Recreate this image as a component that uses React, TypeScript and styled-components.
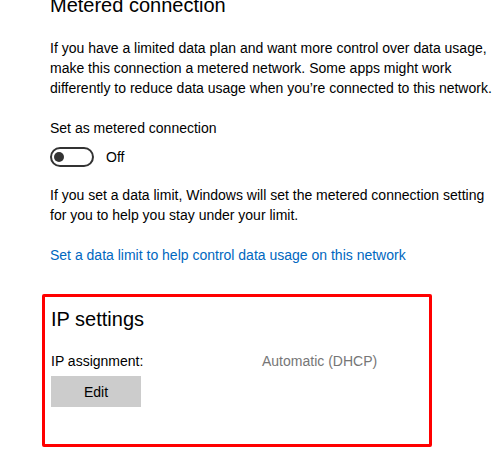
import styled, { createGlobalStyle } from 'styled-components'

const GlobalStyle = createGlobalStyle`
  html, body {
    margin: 0;
    padding: 0;
    background: #ffffff;
  }
  body {
    font-family: "Segoe UI", "Liberation Sans", Arial, sans-serif;
    color: #000000;
    overflow: hidden;
  }
`

const Page = styled.div`
  width: 503px;
  height: 459px;
  padding-left: 50px;
  box-sizing: border-box;
  display: flex;
  flex-direction: column;
  align-items: flex-start;
`

const Heading = styled.h2`
  margin: 0;
  font-size: 20px;
  font-weight: 400;
  line-height: 28px;
  white-space: nowrap;
`

const Title = styled(Heading)`
  margin-top: -9px;
`

const Text = styled.p<{ $gap?: number }>`
  margin: ${p => p.$gap ?? 0}px 0 0;
  font-size: 14px;
  line-height: 20px;
  white-space: pre-line;
`

const Link = styled.a`
  margin-top: 20px;
  font-size: 14px;
  line-height: 20px;
  color: #0067c0;
  text-decoration: none;
  cursor: pointer;
`

const ToggleRow = styled.div`
  display: flex;
  align-items: center;
  gap: 12px;
  margin-top: 9px;
  font-size: 14px;
  line-height: 20px;
`

const Track = styled.div`
  width: 44px;
  height: 20px;
  box-sizing: border-box;
  border: 2px solid #333333;
  border-radius: 10px;
  display: flex;
  align-items: center;
  padding-left: 2px;
`

const Knob = styled.span`
  width: 10px;
  height: 10px;
  border-radius: 50%;
  background: #333333;
`

const Highlight = styled.section`
  margin: 29px 0 0 -8px;
  width: 390px;
  height: 153px;
  box-sizing: border-box;
  border: 3px solid #ff0000;
  border-radius: 2px;
  padding: 8px 6px 0;
  display: flex;
  flex-direction: column;
  align-items: flex-start;
`

const InfoRow = styled.div`
  margin-top: 18px;
  display: grid;
  grid-template-columns: 211px auto;
  font-size: 14px;
  line-height: 20px;
`

const Value = styled.span`
  color: #767676;
`

const Button = styled.button`
  margin-top: 5px;
  width: 90px;
  height: 31px;
  border: none;
  background: #cccccc;
  font-family: inherit;
  font-size: 14px;
  color: #000000;
  padding: 0;
`

const Toggle = () => (
  <ToggleRow>
    <Track>
      <Knob />
    </Track>
    <span>Off</span>
  </ToggleRow>
)

export default function App() {
  return (
    <Page>
      <GlobalStyle />
      <Title>Metered connection</Title>
      <Text $gap={19}>
        {'If you have a limited data plan and want more control over data usage,\nmake this connection a metered network. Some apps might work\ndifferently to reduce data usage when you\u2019re connected to this network.'}
      </Text>
      <Text $gap={20}>Set as metered connection</Text>
      <Toggle />
      <Text $gap={18}>
        {'If you set a data limit, Windows will set the metered connection setting\nfor you to help you stay under your limit.'}
      </Text>
      <Link>Set a data limit to help control data usage on this network</Link>
      <Highlight>
        <Heading>IP settings</Heading>
        <InfoRow>
          <span>IP assignment:</span>
          <Value>Automatic (DHCP)</Value>
        </InfoRow>
        <Button>Edit</Button>
      </Highlight>
    </Page>
  )
}
